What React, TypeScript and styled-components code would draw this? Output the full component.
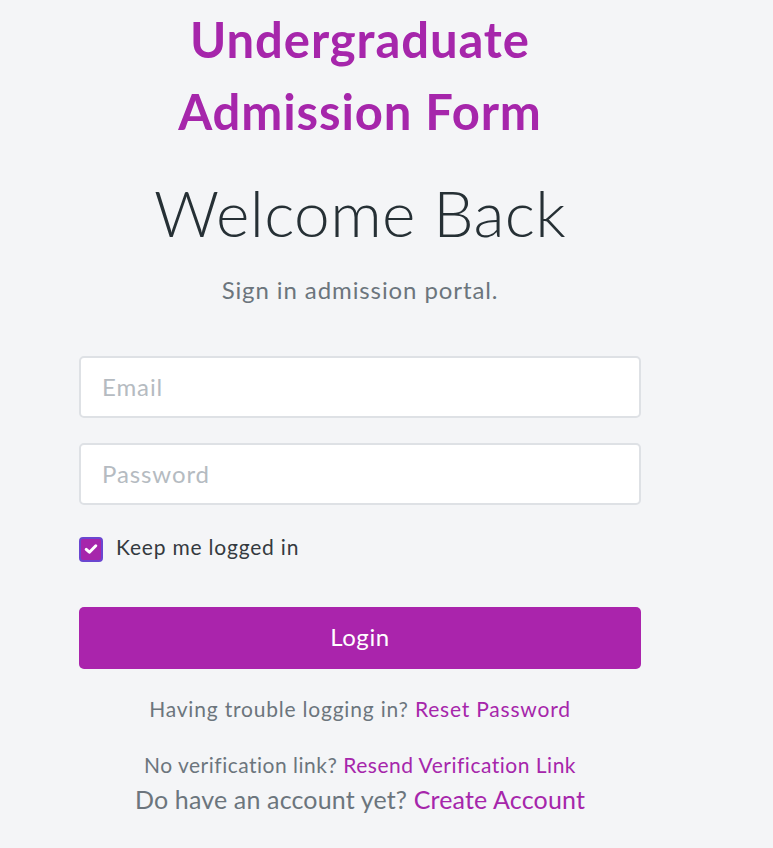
import React from "react";
import styled, { createGlobalStyle } from "styled-components";

const GlobalStyle = createGlobalStyle`
  html, body {
    margin: 0;
    padding: 0;
    background: #f4f5f7;
  }
  body {
    font-family: Lato, "Noto Sans", "Liberation Sans", sans-serif;
    color: #212529;
  }
  * { box-sizing: border-box; }
`;

const Page = styled.div`
  min-height: 848px;
  background: #f4f5f7;
  padding: 3px 0 0 79px;
`;

const Column = styled.div`
  width: 562px;
  display: flex;
  flex-direction: column;
  align-items: stretch;
  text-align: center;
`;

const Title = styled.h1`
  margin: 0;
  font-size: 49px;
  line-height: 72px;
  font-weight: 700;
  letter-spacing: 0.9px;
  color: #a626ab;
`;

const Welcome = styled.h2`
  margin: 28px 0 0;
  font-size: 64px;
  line-height: 1.2;
  font-weight: 300;
  letter-spacing: 0.3px;
  color: #263035;
`;

const Subtitle = styled.p`
  margin: 21px 0 0;
  font-size: 24px;
  line-height: 33px;
  letter-spacing: 0.9px;
  color: #6c757d;
`;

const Form = styled.form`
  margin-top: 50px;
  display: flex;
  flex-direction: column;
  text-align: left;
`;

const Input = styled.input<{ $gap?: number }>`
  width: 100%;
  height: 62px;
  margin-top: ${(p) => p.$gap ?? 0}px;
  padding: 0 21px;
  border: 2px solid #dee1e5;
  border-radius: 5px;
  background: #fff;
  font-family: inherit;
  font-size: 24px;
  letter-spacing: 0.9px;
  color: #212529;
  outline: none;
  &::placeholder {
    color: #b5bbc1;
  }
`;

const CheckRow = styled.label`
  margin-top: 32px;
  display: flex;
  align-items: center;
  gap: 13px;
  font-size: 21px;
  line-height: 1;
  letter-spacing: 0.8px;
  color: #343a40;
  cursor: pointer;
`;

const LabelText = styled.span`
  position: relative;
  top: -3px;
`;

const Box = styled.span`
  width: 24px;
  height: 25px;
  border-radius: 4px;
  background: #a626ab;
  border: 2px solid #6a46d0;
  display: inline-flex;
  align-items: center;
  justify-content: center;
  flex-shrink: 0;
`;

const LoginButton = styled.button`
  margin-top: 45px;
  width: 100%;
  height: 62px;
  padding: 0 0 2px;
  border: none;
  border-radius: 5px;
  background: #aa24ac;
  color: #fff;
  font-family: inherit;
  font-size: 24px;
  letter-spacing: 0.6px;
  cursor: pointer;
`;

const Help = styled.p<{ $size: number; $top: number; $ls: number }>`
  margin: ${(p) => p.$top}px 0 0;
  font-size: ${(p) => p.$size}px;
  line-height: 1.3;
  letter-spacing: ${(p) => p.$ls}px;
  color: #6c757d;
  text-align: center;
`;

const Link = styled.a`
  color: #a626ab;
  text-decoration: none;
`;

export default function App() {
  return (
    <>
      <GlobalStyle />
      <Page>
        <Column>
          <Title>
            Undergraduate
            <br />
            Admission Form
          </Title>
          <Welcome>Welcome Back</Welcome>
          <Subtitle>Sign in admission portal.</Subtitle>
          <Form onSubmit={(e) => e.preventDefault()}>
            <Input type="email" placeholder="Email" />
            <Input type="password" placeholder="Password" $gap={25} />
            <CheckRow>
              <Box>
                <svg width="14" height="12" viewBox="0 0 14 12">
                  <path
                    d="M2.2 6.4 L5.4 9.2 L11.8 2.8"
                    fill="none"
                    stroke="#fff"
                    strokeWidth="3"
                    strokeLinecap="round"
                    strokeLinejoin="round"
                  />
                </svg>
              </Box>
              <LabelText>Keep me logged in</LabelText>
            </CheckRow>
            <LoginButton type="submit">Login</LoginButton>
          </Form>
          <Help $size={21} $top={26} $ls={0.8}>
            Having trouble logging in? <Link href="#">Reset Password</Link>
          </Help>
          <Help $size={21} $top={29} $ls={0.5}>
            No verification link? <Link href="#">Resend Verification Link</Link>
          </Help>
          <Help $size={25} $top={5} $ls={0.15}>
            Do have an account yet? <Link href="#">Create Account</Link>
          </Help>
        </Column>
      </Page>
    </>
  );
}
